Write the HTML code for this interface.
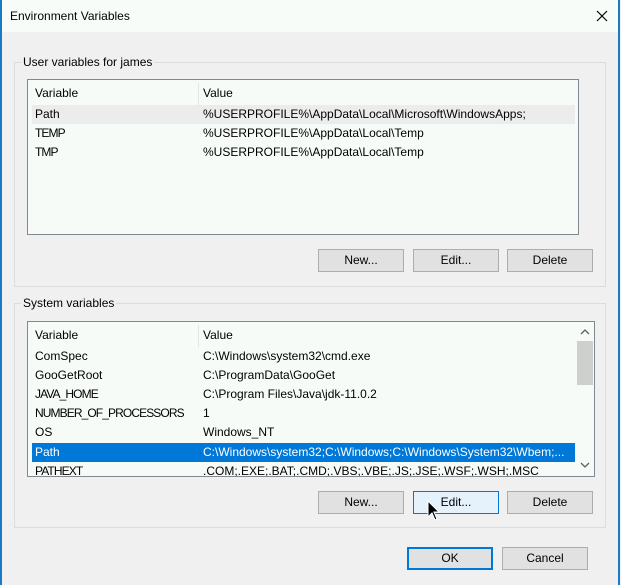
<!DOCTYPE html>
<html><head><style>
*{margin:0;padding:0;box-sizing:border-box}
body{width:621px;height:585px;background:#f0f0f0;font-family:"Liberation Sans",sans-serif;font-size:12px;color:#000;position:relative;overflow:hidden}
.a{position:absolute}
.win{left:0;top:0;width:620px;height:585px;border-left:2px solid #1c79c6;border-right:2px solid #1c79c6;background:#f0f0f0}
.title{left:2px;top:0;width:616px;height:32px;background:#f8fcf8}
.grp{border:1px solid #dcdcdc}
.lbl{background:#f0f0f0;padding:0 2px;line-height:14px}
.list{border:1px solid #828790;background:#f7fbf7;overflow:hidden}
.t{position:absolute;white-space:nowrap;line-height:19px}
.c{letter-spacing:-0.9px}
.btn{position:absolute;background:#e1e1e1;border:1px solid #adadad;text-align:center;line-height:21px;height:23px}
</style></head><body>
<div class="a win"></div>
<div class="a title"></div>
<div class="a" style="left:10px;top:9px">Environment Variables</div>
<svg class="a" style="left:595px;top:9px" width="14" height="14"><path d="M2 2L12 12M12 2L2 12" stroke="#000" stroke-width="1.2"/></svg>

<div class="a grp" style="left:14px;top:62px;width:592px;height:225px"></div>
<div class="a lbl" style="left:21px;top:55px">User variables for james</div>
<div class="a list" style="left:27px;top:79px;width:552px;height:156px">
 <div class="a" style="left:170px;top:3px;width:1px;height:22px;background:#e5e5e5"></div>
 <div class="t" style="left:7px;top:4px">Variable</div><div class="t" style="left:175px;top:4px">Value</div>
 <div class="a" style="left:4px;top:25px;width:543px;height:19px;background:#ececec"></div>
 <div class="t" style="left:7px;top:25px">Path</div><div class="t" style="left:175px;top:25px">%USERPROFILE%\AppData\Local\Microsoft\WindowsApps;</div>
 <div class="t c" style="left:7px;top:44px">TEMP</div><div class="t" style="left:175px;top:44px">%USERPROFILE%\AppData\Local\Temp</div>
 <div class="t c" style="left:7px;top:63px">TMP</div><div class="t" style="left:175px;top:63px">%USERPROFILE%\AppData\Local\Temp</div>
</div>
<div class="btn" style="left:318px;top:249px;width:86px">New...</div>
<div class="btn" style="left:413px;top:249px;width:86px">Edit...</div>
<div class="btn" style="left:507px;top:249px;width:86px">Delete</div>

<div class="a grp" style="left:14px;top:303px;width:592px;height:225px"></div>
<div class="a lbl" style="left:21px;top:296px">System variables</div>
<div class="a list" style="left:27px;top:321px;width:568px;height:156px">
 <div class="a" style="left:548px;top:0;width:18px;height:154px;background:#f7fbf7"></div>
 <div class="a" style="left:549px;top:19px;width:16px;height:44px;background:#cdd0cd"></div>
 <svg class="a" style="left:550px;top:5px" width="14" height="10"><path d="M3 7L7 3L11 7" stroke="#606060" stroke-width="1.3" fill="none"/></svg>
 <svg class="a" style="left:550px;top:138px" width="14" height="10"><path d="M3 3L7 7L11 3" stroke="#606060" stroke-width="1.3" fill="none"/></svg>
 <div class="a" style="left:170px;top:3px;width:1px;height:22px;background:#e5e5e5"></div>
 <div class="t" style="left:7px;top:4px">Variable</div><div class="t" style="left:175px;top:4px">Value</div>
 <div class="t" style="left:7px;top:25px">ComSpec</div><div class="t" style="left:175px;top:25px">C:\Windows\system32\cmd.exe</div>
 <div class="t" style="left:7px;top:44px">GooGetRoot</div><div class="t" style="left:175px;top:44px">C:\ProgramData\GooGet</div>
 <div class="t c" style="left:7px;top:63px">JAVA_HOME</div><div class="t" style="left:175px;top:63px">C:\Program Files\Java\jdk-11.0.2</div>
 <div class="t c" style="left:7px;top:82px">NUMBER_OF_PROCESSORS</div><div class="t" style="left:175px;top:82px">1</div>
 <div class="t" style="left:7px;top:101px">OS</div><div class="t" style="left:175px;top:101px">Windows_NT</div>
 <div class="a" style="left:4px;top:121px;width:543px;height:19px;background:#0078d7"></div>
 <div class="t" style="left:7px;top:121px;color:#fff">Path</div><div class="t" style="left:175px;top:121px;color:#fff">C:\Windows\system32;C:\Windows;C:\Windows\System32\Wbem;...</div>
 <div class="t c" style="left:7px;top:140px">PATHEXT</div><div class="t" style="left:175px;top:140px">.COM;.EXE;.BAT;.CMD;.VBS;.VBE;.JS;.JSE;.WSF;.WSH;.MSC</div>
</div>
<div class="btn" style="left:318px;top:491px;width:86px">New...</div>
<div class="btn" style="left:413px;top:491px;width:86px;background:#e5f1fb;border-color:#0078d7">Edit...</div>
<div class="btn" style="left:507px;top:491px;width:86px">Delete</div>
<svg class="a" style="left:427px;top:500px" width="14" height="22"><path d="M1 1L1 17L5 13L8 20L10 19L7 12L12 12Z" fill="#000" stroke="#fff" stroke-width="1"/></svg>

<div class="btn" style="left:407px;top:547px;width:86px;border:2px solid #0078d7;line-height:19px">OK</div>
<div class="btn" style="left:502px;top:547px;width:86px">Cancel</div>
</body></html>
